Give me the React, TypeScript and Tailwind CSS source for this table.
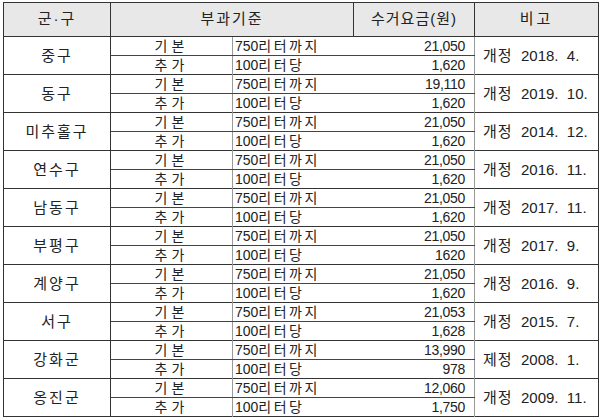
import React from "react"

type Row = {
  name: string
  base: string
  extra: string
  note: string
}

const rows: Row[] = [
  { name: "중구", base: "21,050", extra: "1,620", note: "개정 2018. 4." },
  { name: "동구", base: "19,110", extra: "1,620", note: "개정 2019. 10." },
  { name: "미추홀구", base: "21,050", extra: "1,620", note: "개정 2014. 12." },
  { name: "연수구", base: "21,050", extra: "1,620", note: "개정 2016. 11." },
  { name: "남동구", base: "21,050", extra: "1,620", note: "개정 2017. 11." },
  { name: "부평구", base: "21,050", extra: "1620", note: "개정 2017. 9." },
  { name: "계양구", base: "21,050", extra: "1,620", note: "개정 2016. 9." },
  { name: "서구", base: "21,053", extra: "1,628", note: "개정 2015. 7." },
  { name: "강화군", base: "13,990", extra: "978", note: "제정 2008. 1." },
  { name: "옹진군", base: "12,060", extra: "1,750", note: "개정 2009. 11." },
]

const font = { fontFamily: '"Liberation Sans", "Noto Sans CJK KR", sans-serif' }

export default function App() {
  return (
    <div className="w-[600px] h-[420px] bg-white pt-[2px] pl-[3px] text-[#222]" style={font}>
      <table className="w-[595px] table-fixed border-collapse border border-[#333]">
        <colgroup>
          <col className="w-[107px]" />
          <col className="w-[122px]" />
          <col className="w-[121px]" />
          <col className="w-[121px]" />
          <col className="w-[124px]" />
        </colgroup>
        <thead>
          <tr className="h-[34px] bg-[#e8e8e8] text-[15px]">
            <th className="border border-[#333] p-0 font-normal tracking-[2px]">군·구</th>
            <th colSpan={2} className="border border-[#333] p-0 font-normal tracking-[2px]">
              부과기준
            </th>
            <th className="border border-[#333] p-0 font-normal tracking-[1px]">수거요금(원)</th>
            <th className="border border-[#333] p-0 font-normal tracking-[3px]">비고</th>
          </tr>
        </thead>
        <tbody>
          {rows.map((r) => (
            <React.Fragment key={r.name}>
              <tr className="h-[19px] text-[14px] leading-[17px]">
                <td
                  rowSpan={2}
                  className="border-t border-r border-[#333] p-0 text-center text-[15px] tracking-[2px]"
                >
                  {r.name}
                </td>
                <td className="border-t border-[#333] border-r border-r-[#999] border-b border-b-[#444] p-0 text-center tracking-[4px]">
                  기본
                </td>
                <td className="border-t border-[#333] border-b border-b-[#444] p-0 pl-[2px] whitespace-nowrap">
                  750<span className="tracking-[2.5px]">리터까지</span>
                </td>
                <td className="border-t border-[#333] border-b border-b-[#444] border-r border-r-[#999] p-0 pr-[9px] text-right tracking-[-0.3px]">
                  {r.base}
                </td>
                <td
                  rowSpan={2}
                  className="border-t border-[#333] p-0 pl-[8px] text-[15px] whitespace-pre"
                >
                  <span className="tracking-[1px]">{r.note.slice(0, 2)}</span>
                  {r.note.slice(2).replace(/ /g, "  ")}
                </td>
              </tr>
              <tr className="h-[19px] text-[14px] leading-[17px]">
                <td className="border-r border-r-[#999] p-0 text-center tracking-[4px]">추가</td>
                <td className="p-0 pl-[2px] whitespace-nowrap">
                  100<span className="tracking-[2.5px]">리터당</span>
                </td>
                <td className="border-r border-r-[#999] p-0 pr-[9px] text-right tracking-[-0.3px]">
                  {r.extra}
                </td>
              </tr>
            </React.Fragment>
          ))}
        </tbody>
      </table>
    </div>
  )
}
